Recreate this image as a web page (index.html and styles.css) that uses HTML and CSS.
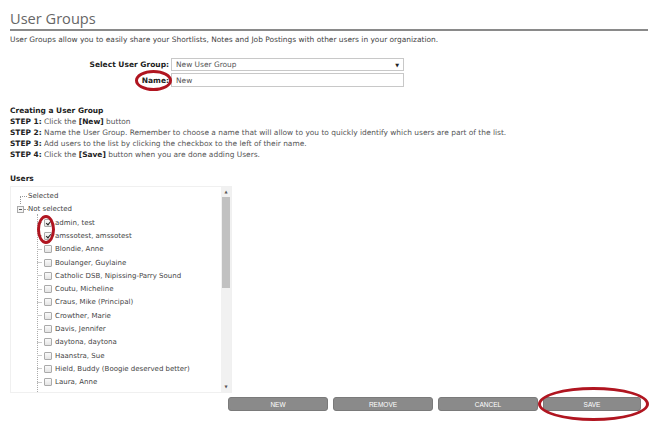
FILE: index.html
```html
<!DOCTYPE html>
<html>
<head>
<meta charset="utf-8">
<link rel="stylesheet" href="styles.css">
</head>
<body>
<div class="page">
  <h1 class="title">User Groups</h1>
  <p class="intro">User Groups allow you to easily share your Shortlists, Notes and Job Postings with other users in your organization.</p>

  <div class="form">
    <div class="row">
      <span class="label">Select User Group:</span>
      <div class="field select"><span>New User Group</span><span class="caret">▼</span></div>
    </div>
    <div class="row">
      <span class="label"><span class="marked">Name:<span class="ring ring-name"></span></span></span>
      <div class="field input">New</div>
    </div>
  </div>

  <div class="steps">
    <div class="steps-title">Creating a User Group</div>
    <div><b>STEP 1:</b> Click the <b>[New]</b> button</div>
    <div><b>STEP 2:</b> Name the User Group. Remember to choose a name that will allow to you to quickly identify which users are part of the list.</div>
    <div><b>STEP 3:</b> Add users to the list by clicking the checkbox to the left of their name.</div>
    <div><b>STEP 4:</b> Click the <b>[Save]</b> button when you are done adding Users.</div>
  </div>

  <div class="users-title">Users</div>
  <div class="tree-box">
    <div class="tree">
      <div class="node selected-node"><span class="hline"></span>Selected</div>
      <div class="node notsel-node"><span class="toggle"></span>Not selected</div>
      <div class="children">
        <span class="ring ring-checks"></span>
        <div class="item"><span class="dash"></span><span class="cb checked"></span>admin, test</div>
        <div class="item"><span class="dash"></span><span class="cb checked"></span>amssotest, amssotest</div>
        <div class="item"><span class="dash"></span><span class="cb"></span>Blondie, Anne</div>
        <div class="item"><span class="dash"></span><span class="cb"></span>Boulanger, Guylaine</div>
        <div class="item"><span class="dash"></span><span class="cb"></span>Catholic DSB, Nipissing-Parry Sound</div>
        <div class="item"><span class="dash"></span><span class="cb"></span>Coutu, Micheline</div>
        <div class="item"><span class="dash"></span><span class="cb"></span>Craus, Mike (Principal)</div>
        <div class="item"><span class="dash"></span><span class="cb"></span>Crowther, Marie</div>
        <div class="item"><span class="dash"></span><span class="cb"></span>Davis, Jennifer</div>
        <div class="item"><span class="dash"></span><span class="cb"></span>daytona, daytona</div>
        <div class="item"><span class="dash"></span><span class="cb"></span>Haanstra, Sue</div>
        <div class="item"><span class="dash"></span><span class="cb"></span>Hield, Buddy (Boogie deserved better)</div>
        <div class="item"><span class="dash"></span><span class="cb"></span>Laura, Anne</div>
        <div class="item"><span class="dash"></span><span class="cb"></span>Lambert, Jean-Michel</div>
      </div>
    </div>
    <div class="scrollbar">
      <span class="sb-arrow">▲</span>
      <div class="sb-track"><div class="sb-thumb"></div></div>
      <span class="sb-arrow">▼</span>
    </div>
  </div>

  <div class="buttons">
    <div class="btn">NEW</div>
    <div class="btn">REMOVE</div>
    <div class="btn">CANCEL</div>
    <div class="btn save">SAVE<span class="ring ring-save"></span></div>
  </div>
</div>
</body>
</html>
```

FILE: styles.css
```css
* { box-sizing: border-box; }
html, body { margin: 0; padding: 0; background: #fff; }
body {
  font-family: "DejaVu Sans", Verdana, sans-serif;
  font-size: 7.45px;
  color: #444;
  width: 650px;
  height: 421px;
  overflow: hidden;
}
.page { padding: 9px 2px 0 10px; }

.title {
  font-family: "Open Sans", "DejaVu Sans", sans-serif;
  font-weight: 400;
  font-size: 14.6px;
  color: #666;
  margin: 0;
  line-height: 19px;
  padding-bottom: 1px;
  border-bottom: 2px solid #8a8a8a;
}
.intro { margin: 3px 0 0; line-height: 12px; color: #444; }

.form { margin-top: 12px; display: flex; flex-direction: column; gap: 2px; }
.row { display: flex; align-items: center; }
.label {
  width: 161px;
  text-align: right;
  font-weight: bold;
  color: #222;
  padding-right: 2px;
  font-size: 7.5px;
}
.marked { position: relative; }
.field {
  width: 233px;
  height: 13px;
  border: 1px solid #c8c8c8;
  background: #fff;
  padding: 0 4px;
  display: flex;
  align-items: center;
  color: #555;
}
.input { height: 14px; }
.select { justify-content: space-between; }
.caret { font-size: 5px; color: #222; }

.steps { margin-top: 18px; line-height: 11px; color: #555; }
.steps b, .steps-title { color: #222; font-weight: bold; }

.users-title { margin-top: 13px; font-weight: bold; color: #222; line-height: 12px; font-size: 7.5px; }

.tree-box {
  margin-top: 1px;
  width: 222px;
  height: 207px;
  border: 1px solid #f0f0f0;
  display: flex;
  overflow: hidden;
}
.tree { flex: 1; position: relative; padding: 3px 0 0 6px; font-size: 7px; color: #444; overflow: hidden; }
.node { height: 13px; line-height: 13px; display: flex; align-items: center; position: relative; padding-left: 11px; }
.selected-node::before {
  content: ""; position: absolute; left: 3px; top: 6px; height: 8px;
  border-left: 1px dotted #999;
}
.hline { position: absolute; left: 3px; top: 6px; width: 7px; border-top: 1px dotted #999; }
.toggle {
  position: absolute; left: 0; top: 3px; width: 7px; height: 7px;
  border: 1px solid #aaa; background: #f4f4f4;
}
.toggle::after { content: ""; position: absolute; left: 1px; right: 1px; top: 2px; border-top: 1px solid #555; }
.notsel-node::after { content: ""; position: absolute; left: 7px; top: 6px; width: 4px; border-top: 1px dotted #999; }

.children { position: relative; margin-left: 20px; }
.children::before { content: ""; position: absolute; left: 0; top: -2px; bottom: 0; border-left: 1px dotted #aaa; }
.item { height: 13.3px; display: flex; align-items: center; position: relative; white-space: nowrap; }
.dash { width: 5px; border-top: 1px solid #ccc; margin-right: 2px; }
.cb {
  width: 8px; height: 8px; border: 1px solid #aaa; border-radius: 1px;
  background: linear-gradient(#fafafa, #e4e4e4); margin-right: 3px; position: relative; flex: none;
}
.cb.checked::after {
  content: ""; position: absolute; left: 2px; top: 0; width: 2px; height: 4px;
  border: solid #222; border-width: 0 1.5px 1.5px 0; transform: rotate(40deg);
}

.scrollbar { width: 10px; background: #f1f1f1; display: flex; flex-direction: column; align-items: center; }
.sb-arrow { font-size: 4px; color: #555; height: 10px; line-height: 10px; }
.sb-track { flex: 1; width: 100%; position: relative; }
.sb-thumb { position: absolute; left: 1px; right: 1px; top: 0; height: 91px; background: #c1c1c1; }

.buttons { display: flex; justify-content: flex-end; gap: 5px; margin-top: 4px; padding-right: 7px; }
.btn {
  width: 100px; height: 14px; background: #8a8a8a; border-radius: 3px; color: #fff;
  font-family: "Liberation Sans", Arial, sans-serif; font-size: 6.5px;
  display: flex; align-items: center; justify-content: center; position: relative;
  border: 1px solid #7a7a7a;
}
.btn.save { width: 98px; }

.ring { position: absolute; border: 3px solid #b01520; border-radius: 50%; pointer-events: none; }
.ring-name { left: -7px; top: -6px; width: 37px; height: 21px; }
.ring-checks { left: 0; top: -1px; width: 18px; height: 29px; z-index: 2; }
.ring-save { left: -6px; top: -11px; width: 111px; height: 34px; }
```
